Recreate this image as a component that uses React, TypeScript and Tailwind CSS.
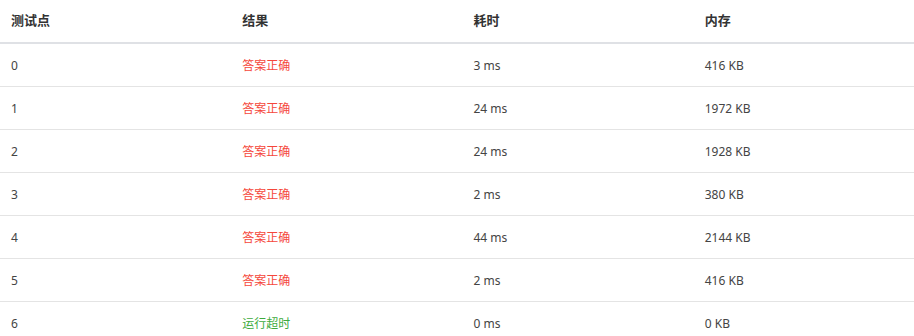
import React from "react";

const rows = [
  { id: "0", status: "ac", time: "3 ms", mem: "416 KB" },
  { id: "1", status: "ac", time: "24 ms", mem: "1972 KB" },
  { id: "2", status: "ac", time: "24 ms", mem: "1928 KB" },
  { id: "3", status: "ac", time: "2 ms", mem: "380 KB" },
  { id: "4", status: "ac", time: "44 ms", mem: "2144 KB" },
  { id: "5", status: "ac", time: "2 ms", mem: "416 KB" },
  { id: "6", status: "tle", time: "0 ms", mem: "0 KB" },
];

const font = { fontFamily: '"Noto Sans", "Noto Sans CJK SC", sans-serif' };

export default function App() {
  return (
    <div className="w-[914px] h-[336px] overflow-hidden bg-white" style={font}>
      <div className="w-[925px]">
        <div className="grid grid-cols-4 h-[44px] border-b-2 border-[#dfe1e5] text-[13px] font-bold text-[#333]">
          <div className="pl-[11px] flex items-center">测试点</div>
          <div className="pl-[11px] flex items-center">结果</div>
          <div className="pl-[11px] flex items-center">耗时</div>
          <div className="pl-[11px] flex items-center">内存</div>
        </div>
        {rows.map((r) => (
          <div
            key={r.id}
            className="grid grid-cols-4 h-[43px] pt-[2px] border-b border-[#e4e4e4] text-[12px] text-[#444]"
          >
            <div className="pl-[11px] flex items-center">{r.id}</div>
            <div
              className={
                "pl-[11px] flex items-center " +
                (r.status === "ac" ? "text-[#f5473b]" : "text-[#3dab3d]")
              }
            >
              {r.status === "ac" ? "答案正确" : "运行超时"}
            </div>
            <div className="pl-[11px] flex items-center">{r.time}</div>
            <div className="pl-[11px] flex items-center">{r.mem}</div>
          </div>
        ))}
      </div>
    </div>
  );
}
